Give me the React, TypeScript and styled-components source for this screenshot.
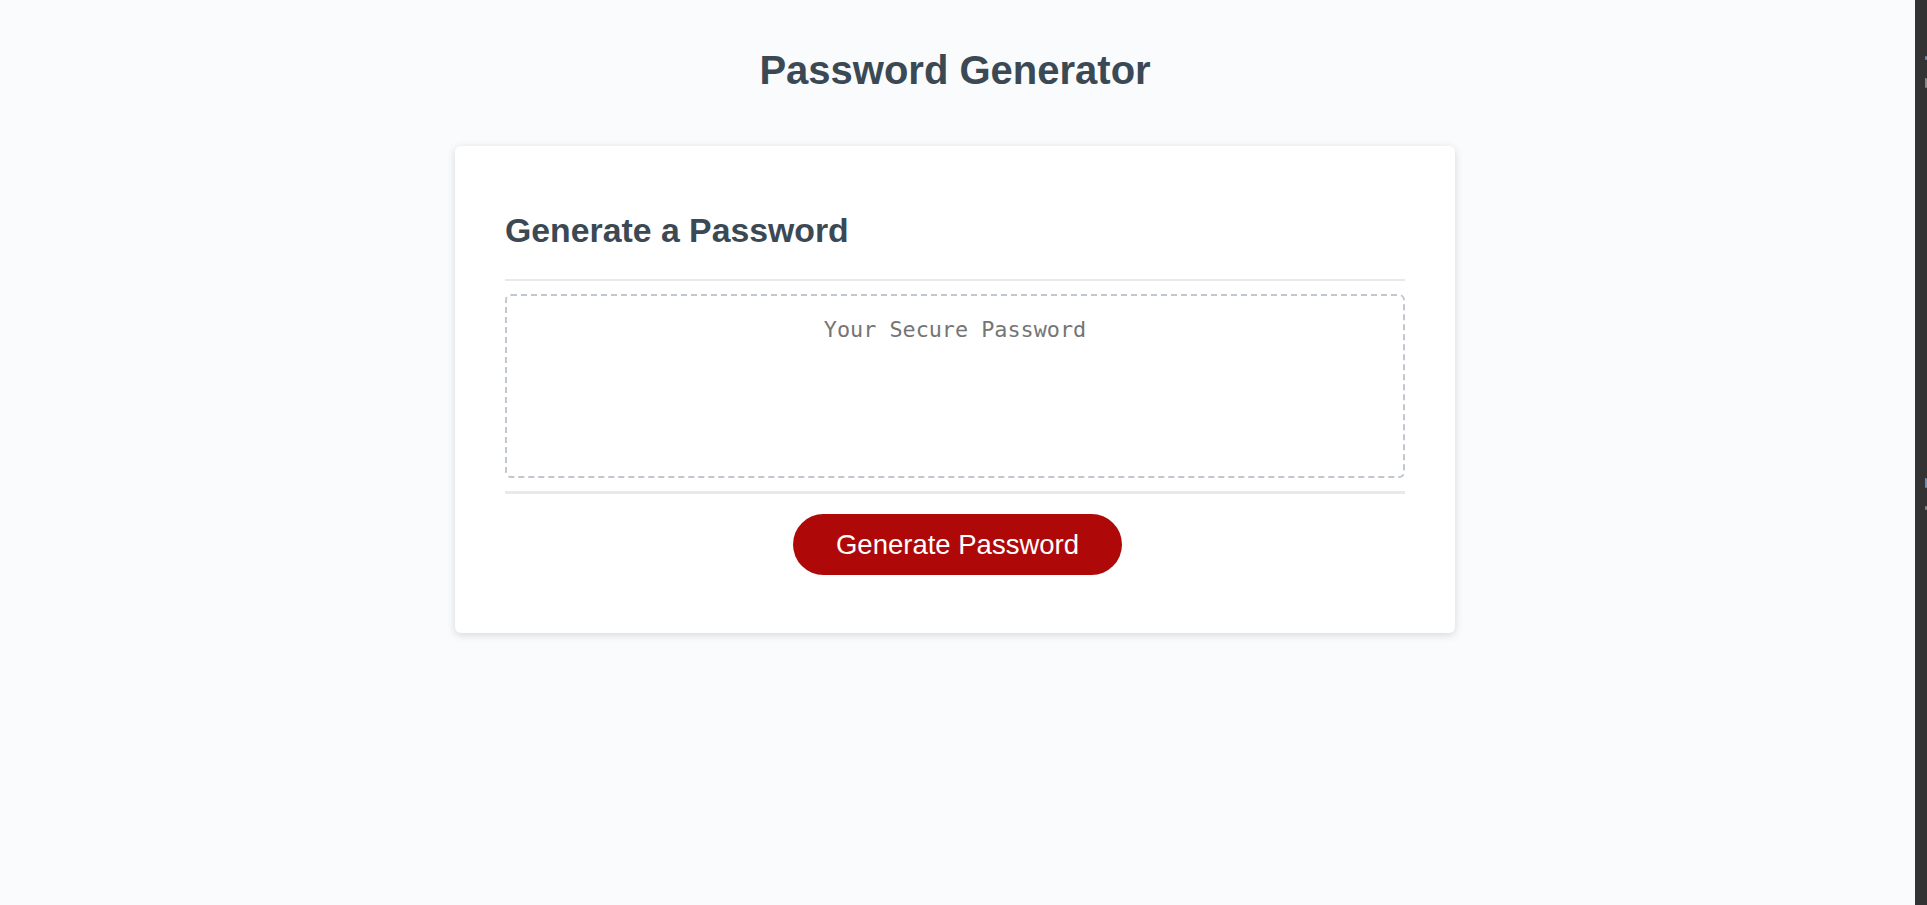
import styled, { createGlobalStyle } from "styled-components";

const GlobalStyle = createGlobalStyle`
  * {
    box-sizing: border-box;
  }

  html,
  body {
    margin: 0;
    padding: 0;
    height: 100%;
  }

  body {
    font-family: "Liberation Sans", Arial, sans-serif;
    background-color: #f9fbfd;
    overflow: hidden;
  }
`;

const App = () => {
  return (
    <>
      <GlobalStyle />
      <Screen>
        <Wrapper>
          <PageTitle>Password Generator</PageTitle>

          <Card>
            <CardHeader>
              <CardTitle>Generate a Password</CardTitle>
            </CardHeader>

            <CardBody>
              <PasswordBox
                readOnly
                placeholder="Your Secure Password"
                aria-label="Generated Password"
              />
            </CardBody>

            <CardFooter>
              <GenerateButton type="button">Generate Password</GenerateButton>
            </CardFooter>
          </Card>
        </Wrapper>

        <SidePanel>
          <PanelMark $top={56} $color="#6f8fb0" />
          <PanelMark $top={78} $color="#8a8a8a" $tall />
          <PanelMark $top={478} $color="#6f8fb0" $tall />
          <PanelMark $top={506} $color="#8a8a8a" />
        </SidePanel>
      </Screen>
    </>
  );
};

export default App;

const Screen = styled.div`
  width: 100vw;
  height: 100vh;
  display: flex;
`;

const Wrapper = styled.main`
  flex: 1;
  min-width: 0;
  display: flex;
  flex-direction: column;
  align-items: center;
  padding: 47px 5px 0 0;
`;

const PageTitle = styled.h1`
  margin: 0;
  font-size: 40px;
  line-height: 46px;
  font-weight: 700;
  color: #3b4954;
  text-align: center;
`;

const Card = styled.section`
  width: 1000px;
  margin-top: 53px;
  padding: 65px 50px 58px;
  background-color: #ffffff;
  border-radius: 6px;
  box-shadow: rgba(0, 0, 0, 0.15) 0px 2px 8px 0px;
`;

const CardHeader = styled.header`
  padding-bottom: 29px;
  border-bottom: 2px solid #e7e9eb;
`;

const CardTitle = styled.h2`
  margin: 0;
  font-size: 33.8px;
  line-height: 39px;
  font-weight: 700;
  color: #3b4954;
`;

const CardBody = styled.div`
  padding: 13px 0;
`;

const PasswordBox = styled.textarea`
  display: block;
  width: 100%;
  height: 184px;
  margin: 0;
  padding: 21px 18px 0;
  border: 2px dashed #c0c7cf;
  border-radius: 6px;
  resize: none;
  overflow: hidden;
  outline: none;
  text-align: center;
  font-family: "DejaVu Sans Mono", "Liberation Mono", monospace;
  font-size: 21.8px;
  line-height: 25px;
  color: #3b4954;
  background: #ffffff;

  &::placeholder {
    color: #757575;
    opacity: 1;
  }
`;

const CardFooter = styled.footer`
  display: flex;
  justify-content: center;
  padding-top: 20px;
  border-top: 3px solid #e7e9eb;
`;

const GenerateButton = styled.button`
  margin: 0 0 0 5px;
  padding: 17px 43px;
  border: none;
  border-radius: 31px;
  background-color: #af0808;
  color: #ffffff;
  font-family: "Liberation Sans", Arial, sans-serif;
  font-size: 27.5px;
  line-height: 27px;
  cursor: pointer;
`;

const SidePanel = styled.aside`
  position: relative;
  width: 12px;
  flex-shrink: 0;
  height: 100%;
  background-color: #333333;
`;

const PanelMark = styled.span<{ $top: number; $color: string; $tall?: boolean }>`
  position: absolute;
  top: ${({ $top }) => $top}px;
  left: 10px;
  width: 2px;
  height: ${({ $tall }) => ($tall ? 10 : 4)}px;
  background-color: ${({ $color }) => $color};
  border-radius: 1px;
`;
